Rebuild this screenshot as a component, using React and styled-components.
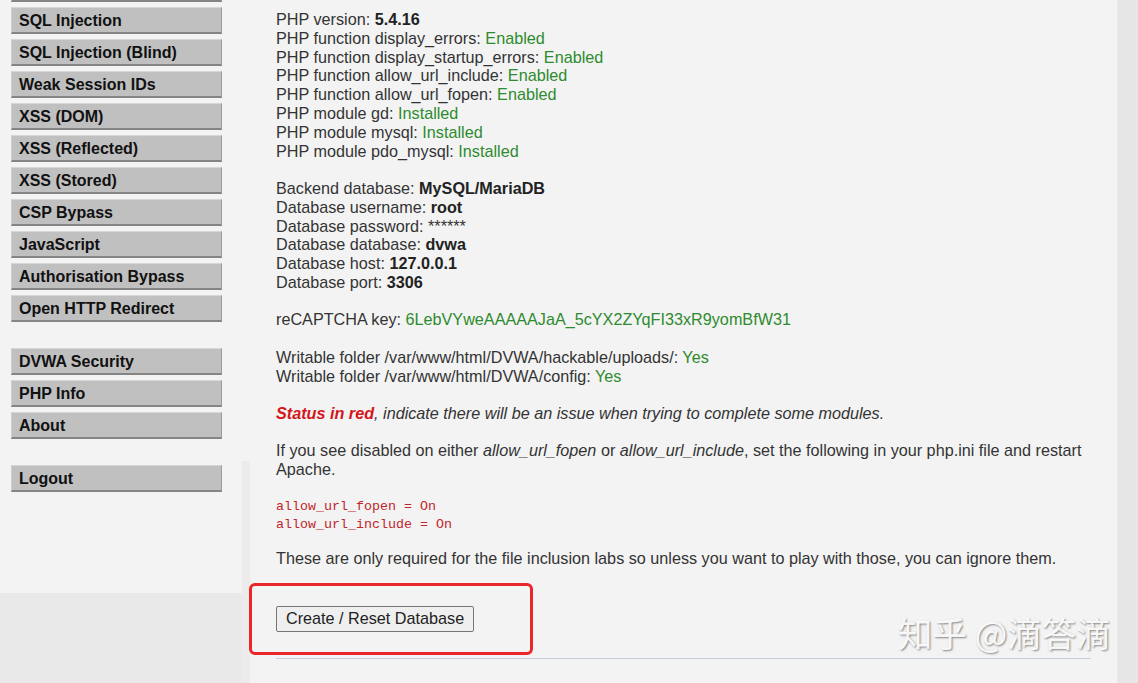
import React from 'react'
import styled, { createGlobalStyle } from 'styled-components'

const Global = createGlobalStyle`
    html, body {
        margin: 0;
        padding: 0;
        background: #e9e9e9;
        font-family: "Liberation Sans", Arial, sans-serif;
        overflow: hidden;
    }
`;

const menuGroups = [
    ['', 'SQL Injection', 'SQL Injection (Blind)', 'Weak Session IDs', 'XSS (DOM)', 'XSS (Reflected)', 'XSS (Stored)', 'CSP Bypass', 'JavaScript', 'Authorisation Bypass', 'Open HTTP Redirect'],
    ['DVWA Security', 'PHP Info', 'About'],
    ['Logout'],
]

function App() {
    return (
        <Page>
            <Global />
            <Sidebar>
                <Menu>
                    {menuGroups.map((group, gi) => (
                        <MenuGroup key={gi}>
                            {group.map((item, i) => <MenuItem key={i}>{item}</MenuItem>)}
                        </MenuGroup>
                    ))}
                </Menu>
            </Sidebar>
            <Gutter />
            <Main>
                <Para>
                    PHP version: <b>5.4.16</b><br />
                    PHP function display_errors: <Ok>Enabled</Ok><br />
                    PHP function display_startup_errors: <Ok>Enabled</Ok><br />
                    PHP function allow_url_include: <Ok>Enabled</Ok><br />
                    PHP function allow_url_fopen: <Ok>Enabled</Ok><br />
                    PHP module gd: <Ok>Installed</Ok><br />
                    PHP module mysql: <Ok>Installed</Ok><br />
                    PHP module pdo_mysql: <Ok>Installed</Ok>
                </Para>
                <Para>
                    Backend database: <b>MySQL/MariaDB</b><br />
                    Database username: <b>root</b><br />
                    Database password: ******<br />
                    Database database: <b>dvwa</b><br />
                    Database host: <b>127.0.0.1</b><br />
                    Database port: <b>3306</b>
                </Para>
                <Para>
                    reCAPTCHA key: <Ok>6LebVYweAAAAAJaA_5cYX2ZYqFI33xR9yomBfW31</Ok>
                </Para>
                <Para>
                    Writable folder /var/www/html/DVWA/hackable/uploads/: <Ok>Yes</Ok><br />
                    Writable folder /var/www/html/DVWA/config: <Ok>Yes</Ok>
                </Para>
                <Para>
                    <i><Bad>Status in red</Bad>, indicate there will be an issue when trying to complete some modules.</i>
                </Para>
                <Para>
                    If you see disabled on either <i>allow_url_fopen</i> or <i>allow_url_include</i>, set the following in your php.ini file and restart Apache.
                </Para>
                <Code>
                    allow_url_fopen = On{'\n'}allow_url_include = On
                </Code>
                <Para>
                    These are only required for the file inclusion labs so unless you want to play with those, you can ignore them.
                </Para>
                <ButtonRow>
                    <ResetButton>Create / Reset Database</ResetButton>
                </ButtonRow>
                <Rule />
                <Highlight />
                <Watermark>知乎 @滴答滴</Watermark>
            </Main>
            <RightEdge />
        </Page>
    )
}

export default App

const Page = styled.div`
    display: flex;
    width: 1138px;
    height: 683px;
    overflow: hidden;
`;
const Sidebar = styled.div`
    width: 242px;
    flex-shrink: 0;
`;
const Menu = styled.div`
    height: 593px;
    background: #f3f3f3;
    overflow: hidden;
    display: flex;
    flex-direction: column;
    gap: 26px;
`;
const MenuGroup = styled.div`
    display: flex;
    flex-direction: column;
    gap: 5px;
    &:first-child {
        margin-top: -25px;
    }
`;
const MenuItem = styled.div`
    margin-left: 11px;
    width: 211px;
    height: 27px;
    box-sizing: border-box;
    background: #c0c0c0;
    border-top: 1px solid #d6d6d6;
    border-left: 1px solid #cfcfcf;
    border-right: 1px solid #9c9c9c;
    border-bottom: 2px solid #858585;
    padding: 2px 0 0 7px;
    font-size: 16px;
    font-weight: bold;
    line-height: 22px;
    color: #111;
    white-space: nowrap;
`;
const Gutter = styled.div`
    width: 8px;
    flex-shrink: 0;
    background: linear-gradient(#f3f3f3 0 461px, #ebebeb 461px);
`;
const Main = styled.div`
    position: relative;
    flex: 1;
    background: #f3f3f3;
    padding: 10px 25px 0 26px;
    color: #333;
    font-size: 16.2px;
    line-height: 18.8px;
    b {
        color: #222;
    }
`;
const Para = styled.p`
    margin: 0 0 18.6px;
`;
const Ok = styled.span`
    color: #2e8b2e;
`;
const Bad = styled.b`
    && {
        color: #d3161c;
    }
`;
const Code = styled.pre`
    margin: 0 0 15px;
    font-family: "Liberation Mono", "Courier New", monospace;
    font-size: 13.33px;
    line-height: 18px;
    color: #c0262b;
`;
const ButtonRow = styled.div`
    padding-top: 20px;
`;
const ResetButton = styled.button`
    font-family: "Liberation Sans", Arial, sans-serif;
    font-size: 16.2px;
    color: #222;
    height: 26px;
    padding: 0 9px;
    background: #efefef;
    border: 1px solid #767676;
    border-radius: 2px;
`;
const Rule = styled.div`
    margin-top: 26px;
    border-top: 1px solid #c5cedc;
`;
const Highlight = styled.div`
    position: absolute;
    left: -1px;
    top: 583px;
    width: 284px;
    height: 72px;
    box-sizing: border-box;
    border: 3px solid #e8262b;
    border-radius: 6px;
`;
const Watermark = styled.div`
    position: absolute;
    left: 648px;
    top: 611px;
    font-family: "Noto Sans CJK SC", sans-serif;
    font-size: 34.5px;
    line-height: 42px;
    color: rgba(255, 255, 255, 0.92);
    text-shadow: 1px 1px 2px rgba(0, 0, 0, 0.45);
    white-space: nowrap;
`;
const RightEdge = styled.div`
    width: 21px;
    flex-shrink: 0;
    background: #e6e6e6;
    border-left: 1px solid #f7f7f7;
`;
